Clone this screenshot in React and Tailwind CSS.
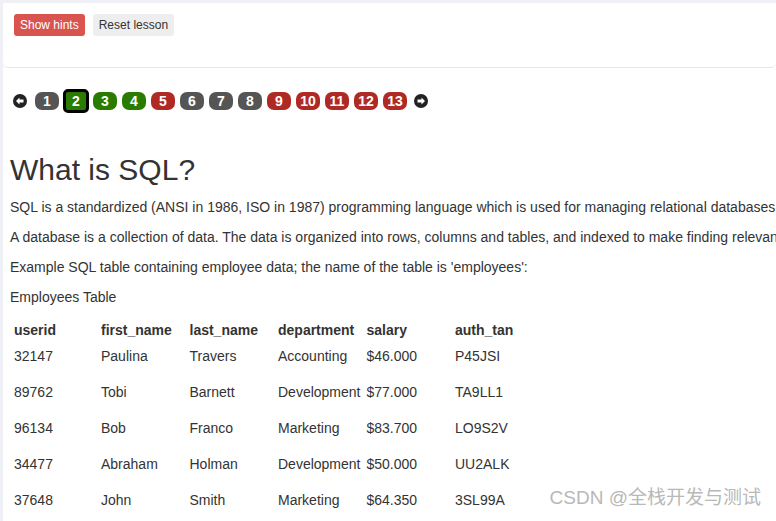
import React from "react";

const pages = [
  { n: 1, c: "bg-[#555555]" },
  { n: 2, c: "bg-[#2a7c00]", active: true },
  { n: 3, c: "bg-[#2a7c00]" },
  { n: 4, c: "bg-[#2a7c00]" },
  { n: 5, c: "bg-[#b02a25]" },
  { n: 6, c: "bg-[#555555]" },
  { n: 7, c: "bg-[#555555]" },
  { n: 8, c: "bg-[#555555]" },
  { n: 9, c: "bg-[#b02a25]" },
  { n: 10, c: "bg-[#b02a25]" },
  { n: 11, c: "bg-[#b02a25]" },
  { n: 12, c: "bg-[#b02a25]" },
  { n: 13, c: "bg-[#b02a25]" },
];

const rows = [
  ["32147", "Paulina", "Travers", "Accounting", "$46.000", "P45JSI"],
  ["89762", "Tobi", "Barnett", "Development", "$77.000", "TA9LL1"],
  ["96134", "Bob", "Franco", "Marketing", "$83.700", "LO9S2V"],
  ["34477", "Abraham", "Holman", "Development", "$50.000", "UU2ALK"],
  ["37648", "John", "Smith", "Marketing", "$64.350", "3SL99A"],
];

const heads = ["userid", "first_name", "last_name", "department", "salary", "auth_tan"];

const Arrow = ({ dir }) => (
  <svg width="14" height="14" viewBox="0 0 14 14">
    <circle cx="7" cy="7" r="7" fill="#222" />
    {dir === "left" ? (
      <path d="M3 7 L6.5 3.5 L6.5 5.6 L10.5 5.6 L10.5 8.4 L6.5 8.4 L6.5 10.5 Z" fill="#fff" />
    ) : (
      <path d="M11 7 L7.5 3.5 L7.5 5.6 L3.5 5.6 L3.5 8.4 L7.5 8.4 L7.5 10.5 Z" fill="#fff" />
    )}
  </svg>
);

const App = () => {
  return (
    <div className="relative min-h-screen h-[521px] overflow-hidden bg-[#eef0f5] pl-[3px] pt-[3px] font-['Liberation_Sans',Arial,sans-serif] text-[#333]">
      <div className="h-full bg-white">
        <div className="h-[65px] rounded-[5px] border-b border-[#e6e6e6] pt-[11px] pl-[11px] flex gap-2 items-start">
          <button className="h-[22px] px-[6px] rounded-[3px] bg-[#d9534f] text-white text-[12px]">
            Show hints
          </button>
          <button className="h-[22px] px-[6px] rounded-[3px] bg-[#eeeeee] text-[#333] text-[12px]">
            Reset lesson
          </button>
        </div>

        <div className="mt-[21px] pl-[10px] flex items-center h-[24px]">
          <Arrow dir="left" />
          <div className="ml-[8px] flex items-center gap-[5px]">
            {pages.map((p) =>
              p.active ? (
                <div
                  key={p.n}
                  className={`w-[26px] h-[24px] -mx-[1px] rounded-[5px] border-[3px] border-black ${p.c} flex items-center justify-center text-white font-bold text-[14px]`}
                >
                  {p.n}
                </div>
              ) : (
                <div
                  key={p.n}
                  className={`w-[24px] h-[18px] rounded-[7px] ${p.c} flex items-center justify-center text-white font-bold text-[14px]`}
                >
                  {p.n}
                </div>
              )
            )}
          </div>
          <div className="ml-[7px]">
            <Arrow dir="right" />
          </div>
        </div>

        <div className="pl-[7px] whitespace-nowrap">
          <h1 className="mt-[40px] mb-[11px] text-[30px] leading-[33px]">What is SQL?</h1>
          <p className="text-[14px] leading-[20px] mb-[10px]">
            SQL is a standardized (ANSI in 1986, ISO in 1987) programming language which is used for managing relational databases and performing various operations on the data in them.
          </p>
          <p className="text-[14px] leading-[20px] mb-[10px]">
            A database is a collection of data. The data is organized into rows, columns and tables, and indexed to make finding relevant information more efficient.
          </p>
          <p className="text-[14px] leading-[20px] mb-[10px]">
            Example SQL table containing employee data; the name of the table is 'employees':
          </p>
          <p className="text-[14px] leading-[20px] mb-[10px]">Employees Table</p>

          <table className="text-[14px] leading-[20px] border-collapse">
            <thead>
              <tr>
                {heads.map((h, i) => (
                  <th
                    key={h}
                    className={`${i === 0 ? "w-[87px]" : "w-[88.5px]"} text-left font-bold pl-[4px] pt-[3px] pb-[3px]`}
                  >
                    {h}
                  </th>
                ))}
              </tr>
            </thead>
            <tbody>
              {rows.map((r) => (
                <tr key={r[0]}>
                  {r.map((c, i) => (
                    <td key={i} className="pl-[4px] pt-[3px] pb-[13px]">
                      {c}
                    </td>
                  ))}
                </tr>
              ))}
            </tbody>
          </table>
        </div>
      </div>

      <div className="absolute right-[15px] bottom-[9px] text-[19px] text-[#b8b8b8] font-['Liberation_Sans','Noto_Sans_CJK_SC',sans-serif]">
        CSDN @全栈开发与测试
      </div>
    </div>
  );
};

export default App;
